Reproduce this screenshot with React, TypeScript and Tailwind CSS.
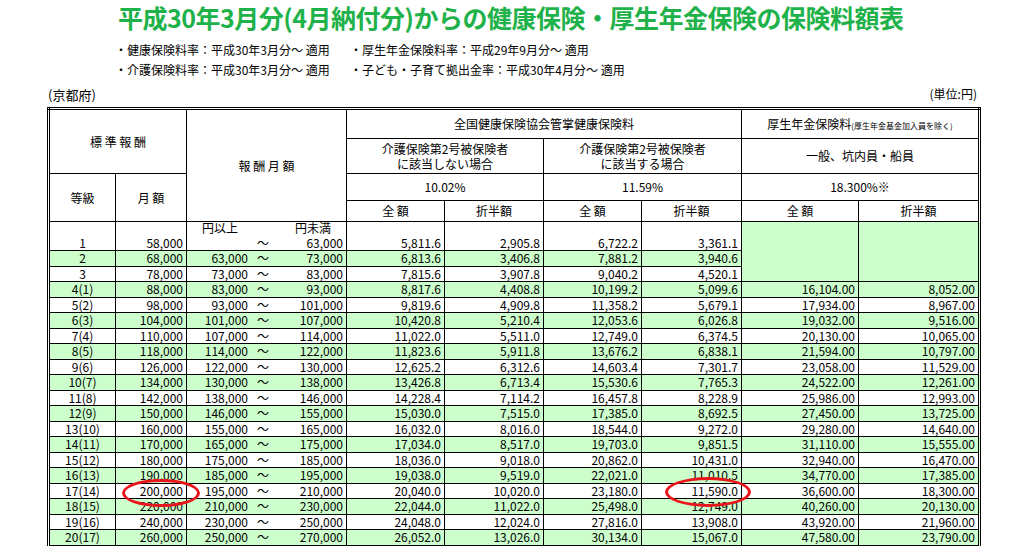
const rows: [string, number, number | null, number][] = [
  ['1', 58000, null, 63000],
  ['2', 68000, 63000, 73000],
  ['3', 78000, 73000, 83000],
  ['4(1)', 88000, 83000, 93000],
  ['5(2)', 98000, 93000, 101000],
  ['6(3)', 104000, 101000, 107000],
  ['7(4)', 110000, 107000, 114000],
  ['8(5)', 118000, 114000, 122000],
  ['9(6)', 126000, 122000, 130000],
  ['10(7)', 134000, 130000, 138000],
  ['11(8)', 142000, 138000, 146000],
  ['12(9)', 150000, 146000, 155000],
  ['13(10)', 160000, 155000, 165000],
  ['14(11)', 170000, 165000, 175000],
  ['15(12)', 180000, 175000, 185000],
  ['16(13)', 190000, 185000, 195000],
  ['17(14)', 200000, 195000, 210000],
  ['18(15)', 220000, 210000, 230000],
  ['19(16)', 240000, 230000, 250000],
  ['20(17)', 260000, 250000, 270000],
  ['21(18)', 280000, 270000, 290000],
];

const fmt = (v: number, d: number) =>
  v.toLocaleString('en-US', { minimumFractionDigits: d, maximumFractionDigits: d });

const cell = 'border border-black px-[3px]';

export default function App() {
  return (
    <div
      className="relative h-[546px] w-[1024px] overflow-hidden bg-white text-[12px] leading-none text-black"
      style={{ fontFamily: '"Noto Sans CJK JP", "Liberation Sans", sans-serif' }}
    >
      <h1 className="pt-[2px] pl-[118px] text-[25px] font-bold leading-[30px] tracking-[-0.5px] text-[#1fb24a]">
        平成30年3月分(4月納付分)からの健康保険・厚生年金保険の保険料額表
      </h1>
      <div className="mt-[12px] ml-[115px] grid w-[560px] grid-cols-[235px_1fr] gap-y-[8px] text-[12px]">
        <span>・健康保険料率：平成30年3月分～ 適用</span>
        <span>・厚生年金保険料率：平成29年9月分～ 適用</span>
        <span>・介護保険料率：平成30年3月分～ 適用</span>
        <span>・子ども・子育て拠出金率：平成30年4月分～ 適用</span>
      </div>
      <div className="mt-[12px] flex w-[977px] justify-between pl-[48px] text-[13px]">
        <span>(京都府)</span>
        <span className="text-[12px]">(単位:円)</span>
      </div>
      <table className="mt-[6px] ml-[47px] w-[931px] table-fixed border-collapse border-[3px] border-double border-black text-center">
        <colgroup>
          <col className="w-[67px]" />
          <col className="w-[71px]" />
          <col className="w-[160px]" />
          <col className="w-[98px]" />
          <col className="w-[99px]" />
          <col className="w-[98px]" />
          <col className="w-[100px]" />
          <col className="w-[117px]" />
          <col className="w-[121px]" />
        </colgroup>
        <tbody>
          <tr className="h-[30px]">
            <td colSpan={2} rowSpan={2} className={cell}>標 準 報 酬</td>
            <td rowSpan={4} className={cell}>報 酬 月 額</td>
            <td colSpan={4} className={cell}>全国健康保険協会管掌健康保険料</td>
            <td colSpan={2} className={cell}>
              厚生年金保険料<span className="text-[8px]">(厚生年金基金加入員を除く)</span>
            </td>
          </tr>
          <tr className="h-[35px]">
            <td colSpan={2} className={`${cell} leading-[15px]`}>介護保険第2号被保険者<br />に該当しない場合</td>
            <td colSpan={2} className={`${cell} leading-[15px]`}>介護保険第2号被保険者<br />に該当する場合</td>
            <td colSpan={2} className={cell}>一般、坑内員・船員</td>
          </tr>
          <tr className="h-[27px]">
            <td rowSpan={2} className={cell}>等級</td>
            <td rowSpan={2} className={cell}>月 額</td>
            <td colSpan={2} className={cell}>10.02%</td>
            <td colSpan={2} className={cell}>11.59%</td>
            <td colSpan={2} className={cell}>18.300%※</td>
          </tr>
          <tr className="h-[21px]">
            <td className={cell}>全 額</td>
            <td className={cell}>折半額</td>
            <td className={cell}>全 額</td>
            <td className={cell}>折半額</td>
            <td className={cell}>全 額</td>
            <td className={cell}>折半額</td>
          </tr>
          {rows.map(([grade, monthly, lo, hi], i) => {
            const green = i % 2 === 1;
            const bg = green ? 'bg-[#ccffcc]' : 'bg-white';
            const first = i === 0;
            const h1 = monthly * 0.1002;
            const h2 = monthly * 0.1159;
            const p = monthly * 0.183;
            const v = first ? 'align-bottom pb-[1px]' : '';
            return (
              <tr key={grade} className={`${first ? 'h-[28px]' : 'h-[15.5px]'} ${bg}`}>
                <td className={`${cell} ${v}`}>{grade}</td>
                <td className={`${cell} ${v} text-right`}>{fmt(monthly, 0)}</td>
                <td className={`${cell} ${v} text-left`}>
                  {first && (
                    <div className="flex justify-between px-[12px] pb-[3px]">
                      <span>円以上</span>
                      <span>円未満</span>
                    </div>
                  )}
                  <div className="flex">
                    <span className="w-[58px] text-right">{lo !== null ? fmt(lo, 0) : ''}</span>
                    <span className="w-[30px] text-center">〜</span>
                    <span className="flex-1 text-right">{fmt(hi, 0)}</span>
                  </div>
                </td>
                <td className={`${cell} ${v} text-right`}>{fmt(h1, 1)}</td>
                <td className={`${cell} ${v} text-right`}>{fmt(h1 / 2, 1)}</td>
                <td className={`${cell} ${v} text-right`}>{fmt(h2, 1)}</td>
                <td className={`${cell} ${v} text-right`}>{fmt(h2 / 2, 1)}</td>
                {first && (
                  <>
                    <td rowSpan={3} className={`${cell} bg-[#ccffcc]`}></td>
                    <td rowSpan={3} className={`${cell} bg-[#ccffcc]`}></td>
                  </>
                )}
                {i >= 3 && (
                  <>
                    <td className={`${cell} text-right`}>{fmt(p, 2)}</td>
                    <td className={`${cell} text-right`}>{fmt(p / 2, 2)}</td>
                  </>
                )}
              </tr>
            );
          })}
        </tbody>
      </table>
      <div className="absolute left-[122px] top-[479px] h-[28px] w-[78px] rounded-[50%] border-[3px] border-[#e8161b]" />
      <div className="absolute left-[665px] top-[477px] h-[30px] w-[86px] rounded-[50%] border-[3px] border-[#e8161b]" />
    </div>
  );
}
